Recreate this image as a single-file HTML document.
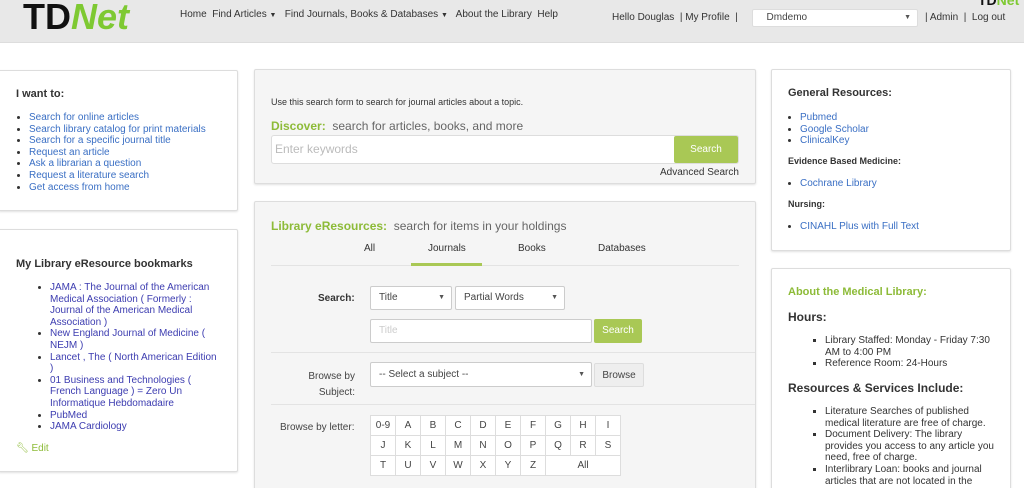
<!DOCTYPE html>
<html><head><meta charset="utf-8"><style>
*{box-sizing:border-box;margin:0;padding:0}
html,body{width:1024px;height:488px;overflow:hidden}
body{background:#fff;font-family:"Liberation Sans",Arial,sans-serif;color:#333;font-size:10px;position:relative}
.a{position:absolute}
.hdr{left:0;top:0;width:1024px;height:43px;background:#e8e8e8;border-bottom:1px solid #ddd}
.panel{position:absolute;background:#fff;border:1px solid #ddd;border-radius:2px;box-shadow:0 1px 2px rgba(0,0,0,.12)}
.gp{background:#f5f5f5}
ul{list-style:disc}
li{line-height:11.6px}
a{color:#3a6fc4;text-decoration:none}
.pl{color:#3c3cb0}
.green{color:#8dbb38;font-weight:bold}
.sel{position:absolute;background:#fff;border:1px solid #ccc;border-radius:2px;font-size:10px;color:#444;padding-left:8px;line-height:22px}
.sel.dd:after{content:"▼";position:absolute;right:6px;top:0;font-size:7px;color:#555}
.btn{position:absolute;background:#a9c855;color:#fff;text-align:center;border-radius:2px}
table{border-collapse:collapse;position:absolute}
td{border:1px solid #ddd;width:25px;height:20px;text-align:center;font-size:10px;color:#444;background:#fff}
</style></head><body>
<div class="a hdr"></div>
<div class="a" style="left:23px;top:-4px;font-size:36px;font-weight:bold;letter-spacing:0;color:#111;line-height:42px">TD<span style="color:#7ec932;font-style:italic">Net</span></div>
<div class="a" style="left:180px;top:9px;font-size:10px;color:#333">Home&nbsp; Find Articles <span style="font-size:7px">▼</span>&nbsp;&nbsp; Find Journals, Books &amp; Databases <span style="font-size:7px">▼</span>&nbsp;&nbsp; About the Library&nbsp; Help</div>
<div class="a" style="left:978px;top:-8px;font-size:14px;font-weight:bold;color:#111">TD<span style="color:#7ec932">Net</span></div>
<div class="a" style="left:612px;top:12px;font-size:10px;color:#333">Hello Douglas &nbsp;| My Profile &nbsp;|</div>
<div class="sel dd" style="left:752px;top:9px;width:166px;height:18px;line-height:16px;border-color:#ddd">&nbsp;&nbsp;Dmdemo</div>
<div class="a" style="left:925px;top:12px;font-size:10px;color:#333">| Admin &nbsp;| &nbsp;Log out</div>

<div class="panel" style="left:-2px;top:70px;width:240px;height:141px"></div>
<div class="a" style="left:16px;top:88px;font-size:11px;font-weight:bold">I want to:</div>
<ul class="a" style="left:29px;top:112px;font-size:10px;color:#333">
<li><a>Search for online articles</a></li><li><a>Search library catalog for print materials</a></li><li><a>Search for a specific journal title</a></li><li><a>Request an article</a></li><li><a>Ask a librarian a question</a></li><li><a>Request a literature search</a></li><li><a>Get access from home</a></li></ul>

<div class="panel" style="left:-2px;top:229px;width:240px;height:243px"></div>
<div class="a" style="left:16px;top:258px;font-size:11px;font-weight:bold">My Library eResource bookmarks</div>
<ul class="a" style="left:50px;top:282px;width:170px;font-size:10px">
<li><a class="pl">JAMA : The Journal of the American Medical Association ( Formerly : Journal of the American Medical Association )</a></li>
<li><a class="pl">New England Journal of Medicine ( NEJM )</a></li>
<li><a class="pl">Lancet , The ( North American Edition )</a></li>
<li><a class="pl">01 Business and Technologies ( French Language ) = Zero Un Informatique Hebdomadaire</a></li>
<li><a class="pl">PubMed</a></li><li><a class="pl">JAMA Cardiology</a></li></ul>
<div class="a" style="left:16px;top:443px;font-size:10px;color:#8dbb38">🔧︎ Edit</div>

<div class="panel gp" style="left:254px;top:69px;width:502px;height:115px"></div>
<div class="a" style="left:271px;top:97px;font-size:9px;color:#333">Use this search form to search for journal articles about a topic.</div>
<div class="a" style="left:271px;top:119px;font-size:12px;color:#666"><span class="green">Discover:</span>&nbsp; search for articles, books, and more</div>
<div class="a" style="left:271px;top:135px;width:468px;height:29px;background:#fff;border:1px solid #ddd;border-radius:3px"></div>
<div class="a" style="left:275px;top:142px;font-size:12px;color:#bbb">Enter keywords</div>
<div class="btn" style="left:674px;top:136px;width:64px;height:27px;line-height:27px;font-size:10px">Search</div>
<div class="a" style="left:660px;top:167px;font-size:10px;color:#333">Advanced Search</div>

<div class="panel gp" style="left:254px;top:201px;width:502px;height:300px"></div>
<div class="a" style="left:271px;top:219px;font-size:12px;color:#666"><span class="green">Library eResources:</span>&nbsp; search for items in your holdings</div>
<div class="a" style="left:364px;top:243px;font-size:10px">All</div>
<div class="a" style="left:428px;top:243px;font-size:10px">Journals</div>
<div class="a" style="left:518px;top:243px;font-size:10px">Books</div>
<div class="a" style="left:598px;top:243px;font-size:10px">Databases</div>
<div class="a" style="left:271px;top:265px;width:468px;height:1px;background:#e3e3e3"></div>
<div class="a" style="left:411px;top:263px;width:71px;height:3px;background:#a9c855"></div>
<div class="a" style="left:318px;top:293px;font-size:10px;font-weight:bold">Search:</div>
<div class="sel dd" style="left:370px;top:286px;width:82px;height:24px">Title</div>
<div class="sel dd" style="left:455px;top:286px;width:110px;height:24px">Partial Words</div>
<div class="sel" style="left:370px;top:319px;width:222px;height:24px;color:#ccc">Title</div>
<div class="btn" style="left:594px;top:319px;width:48px;height:24px;line-height:24px;font-size:10px">Search</div>
<div class="a" style="left:271px;top:352px;width:484px;height:1px;background:#e3e3e3"></div>
<div class="a" style="left:300px;top:369px;width:55px;text-align:right;font-size:10px;line-height:16px;color:#444">Browse by Subject:</div>
<div class="sel dd" style="left:370px;top:362px;width:222px;height:25px;line-height:23px">-- Select a subject --</div>
<div class="a" style="left:594px;top:363px;width:50px;height:24px;line-height:23px;text-align:center;background:#eee;border:1px solid #ddd;border-radius:2px;font-size:10px;color:#444">Browse</div>
<div class="a" style="left:271px;top:404px;width:484px;height:1px;background:#e3e3e3"></div>
<div class="a" style="left:280px;top:422px;font-size:10px;color:#444">Browse by letter:</div>
<table style="left:370px;top:415px">
<tr><td>0-9</td><td>A</td><td>B</td><td>C</td><td>D</td><td>E</td><td>F</td><td>G</td><td>H</td><td>I</td></tr>
<tr><td>J</td><td>K</td><td>L</td><td>M</td><td>N</td><td>O</td><td>P</td><td>Q</td><td>R</td><td>S</td></tr>
<tr><td>T</td><td>U</td><td>V</td><td>W</td><td>X</td><td>Y</td><td>Z</td><td colspan="3">All</td></tr></table>

<div class="panel" style="left:771px;top:69px;width:240px;height:182px"></div>
<div class="a" style="left:788px;top:87px;font-size:11px;font-weight:bold">General Resources:</div>
<ul class="a" style="left:800px;top:112px;font-size:10px"><li><a>Pubmed</a></li><li><a>Google Scholar</a></li><li><a>ClinicalKey</a></li></ul>
<div class="a" style="left:788px;top:156px;font-size:9px;font-weight:bold">Evidence Based Medicine:</div>
<ul class="a" style="left:800px;top:178px;font-size:10px"><li><a>Cochrane Library</a></li></ul>
<div class="a" style="left:788px;top:199px;font-size:9px;font-weight:bold">Nursing:</div>
<ul class="a" style="left:800px;top:221px;font-size:10px"><li><a>CINAHL Plus with Full Text</a></li></ul>

<div class="panel" style="left:771px;top:268px;width:240px;height:240px"></div>
<div class="a" style="left:788px;top:286px;font-size:11px"><span class="green">About the Medical Library:</span></div>
<div class="a" style="left:788px;top:310px;font-size:12px;font-weight:bold">Hours:</div>
<ul class="a" style="left:825px;top:335px;width:175px;font-size:10px;list-style:square"><li>Library Staffed: Monday - Friday 7:30 AM to 4:00 PM</li><li>Reference Room: 24-Hours</li></ul>
<div class="a" style="left:788px;top:381px;font-size:12px;font-weight:bold">Resources &amp; Services Include:</div>
<ul class="a" style="left:825px;top:406px;width:175px;font-size:10px;list-style:square"><li>Literature Searches of published medical literature are free of charge.</li><li>Document Delivery: The library provides you access to any article you need, free of charge.</li><li>Interlibrary Loan: books and journal articles that are not located in the</li></ul>
</body></html>
